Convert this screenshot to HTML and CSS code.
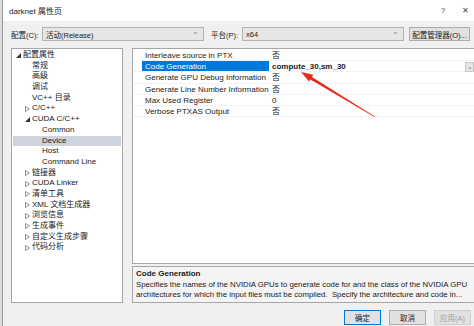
FILE: index.html
```html
<!DOCTYPE html>
<html>
<head>
<meta charset="utf-8">
<link rel="stylesheet" href="styles.css">
</head>
<body>
<div class="screen">
  <div class="backwin"></div>
  <div class="dialog">
    <div class="titlebar">
      <span class="title">darknet 属性页</span>
      <span class="tb-help">?</span>
      <span class="tb-close">✕</span>
    </div>
    <div class="configrow">
      <span class="lbl">配置(C):</span>
      <div class="combo"><span>活动(Release)</span><span class="chev">⌄</span></div>
      <span class="lbl lbl2">平台(P):</span>
      <div class="combo"><span>x64</span><span class="chev">⌄</span></div>
      <div class="btn cfgbtn">配置管理器(O)...</div>
    </div>
    <div class="main">
      <div class="tree">
        <div class="ti l1"><span class="tg"><svg width="5" height="5" viewBox="0 0 5 5"><path d="M5 0V5H0Z" fill="#333"/></svg></span>配置属性</div>
        <div class="ti l2"><span class="tg"></span>常规</div>
        <div class="ti l2"><span class="tg"></span>高级</div>
        <div class="ti l2"><span class="tg"></span>调试</div>
        <div class="ti l2"><span class="tg"></span>VC++ 目录</div>
        <div class="ti l2"><span class="tg"><svg width="5" height="6" viewBox="0 0 5 6"><path d="M0.5 0.5L4.5 3L0.5 5.5Z" fill="none" stroke="#777" stroke-width="0.8"/></svg></span>C/C++</div>
        <div class="ti l2"><span class="tg"><svg width="5" height="5" viewBox="0 0 5 5"><path d="M5 0V5H0Z" fill="#333"/></svg></span>CUDA C/C++</div>
        <div class="ti l3">Common</div>
        <div class="ti l3 sel">Device</div>
        <div class="ti l3">Host</div>
        <div class="ti l3">Command Line</div>
        <div class="ti l2"><span class="tg"><svg width="5" height="6" viewBox="0 0 5 6"><path d="M0.5 0.5L4.5 3L0.5 5.5Z" fill="none" stroke="#777" stroke-width="0.8"/></svg></span>链接器</div>
        <div class="ti l2"><span class="tg"><svg width="5" height="6" viewBox="0 0 5 6"><path d="M0.5 0.5L4.5 3L0.5 5.5Z" fill="none" stroke="#777" stroke-width="0.8"/></svg></span>CUDA Linker</div>
        <div class="ti l2"><span class="tg"><svg width="5" height="6" viewBox="0 0 5 6"><path d="M0.5 0.5L4.5 3L0.5 5.5Z" fill="none" stroke="#777" stroke-width="0.8"/></svg></span>清单工具</div>
        <div class="ti l2"><span class="tg"><svg width="5" height="6" viewBox="0 0 5 6"><path d="M0.5 0.5L4.5 3L0.5 5.5Z" fill="none" stroke="#777" stroke-width="0.8"/></svg></span>XML 文档生成器</div>
        <div class="ti l2"><span class="tg"><svg width="5" height="6" viewBox="0 0 5 6"><path d="M0.5 0.5L4.5 3L0.5 5.5Z" fill="none" stroke="#777" stroke-width="0.8"/></svg></span>浏览信息</div>
        <div class="ti l2"><span class="tg"><svg width="5" height="6" viewBox="0 0 5 6"><path d="M0.5 0.5L4.5 3L0.5 5.5Z" fill="none" stroke="#777" stroke-width="0.8"/></svg></span>生成事件</div>
        <div class="ti l2"><span class="tg"><svg width="5" height="6" viewBox="0 0 5 6"><path d="M0.5 0.5L4.5 3L0.5 5.5Z" fill="none" stroke="#777" stroke-width="0.8"/></svg></span>自定义生成步骤</div>
        <div class="ti l2"><span class="tg"><svg width="5" height="6" viewBox="0 0 5 6"><path d="M0.5 0.5L4.5 3L0.5 5.5Z" fill="none" stroke="#777" stroke-width="0.8"/></svg></span>代码分析</div>
      </div>
      <div class="right">
        <div class="grid">
          <div class="row"><span class="cat"></span><span class="name">Interleave source in PTX</span><span class="val">否</span></div>
          <div class="row"><span class="cat"></span><span class="name hl">Code Generation</span><span class="val bold">compute_30,sm_30<span class="dd">⌄</span></span></div>
          <div class="row"><span class="cat"></span><span class="name">Generate GPU Debug Information</span><span class="val">否</span></div>
          <div class="row"><span class="cat"></span><span class="name">Generate Line Number Information</span><span class="val">否</span></div>
          <div class="row"><span class="cat"></span><span class="name">Max Used Register</span><span class="val">0</span></div>
          <div class="row"><span class="cat"></span><span class="name">Verbose PTXAS Output</span><span class="val">否</span></div>
          <svg class="arrow" width="100" height="60" viewBox="290 60 100 60"><polygon points="302,71 314.3,73.8 313,75.9 376.2,115.7 375.8,116.3 311.4,78.5 310.1,80.6" fill="#e8291c"/></svg>
        </div>
        <div class="desc">
          <div class="dtitle">Code Generation</div>
          <div class="dline">Specifies the names of the NVIDIA GPUs to generate code for and the class of the NVIDIA GPU</div>
          <div class="dline">architectures for which the input files must be compiled.&nbsp; Specify the architecture and code in...</div>
        </div>
      </div>
    </div>
    <div class="btnrow">
      <div class="btn dbtn def">确定</div>
      <div class="btn dbtn">取消</div>
      <div class="btn dbtn dis">应用(A)</div>
    </div>
  </div>
</div>
</body>
</html>
```
FILE: styles.css
```css
* { box-sizing: border-box; }
html, body { margin: 0; padding: 0; }
body {
  width: 474px; height: 326px; overflow: hidden;
  font-family: "Liberation Sans", "Noto Sans CJK SC", sans-serif;
  font-size: 8px; color: #1a1a1a;
  background: #f0f0f0;
}
.screen { display: flex; height: 326px; }
.backwin { width: 3px; background: #dcdcdc; border-right: 1px solid #9a9a9a; flex: none; }
.dialog { flex: 1; display: flex; flex-direction: column; background: #f0f0f0; min-width: 0; }
.titlebar { height: 21px; flex: none; display: flex; align-items: center; padding-left: 6px; background: #ffffff; }
.title { font-size: 8px; flex: 1; }
.tb-help { width: 26px; text-align: center; color: #444; font-size: 8px; }
.tb-close { width: 18px; text-align: center; color: #444; font-size: 8px; }
.configrow { display: flex; align-items: center; height: 14px; flex: none; margin-top: 6px; padding-left: 8px; }
.lbl { width: 31px; flex: none; font-size: 7.5px; }
.lbl2 { margin-left: 7px; }
.combo { width: 162px; height: 14px; border: 1px solid #b4b4b4; background: #e6e6e6; display: flex; align-items: center; justify-content: space-between; padding: 0 4px 0 3px; flex: none; font-size: 7.5px; }
.chev { color: #888; font-size: 8px; line-height: 1; margin-top: -4px; }
.btn { height: 14px; border: 1px solid #adadad; background: #e1e1e1; display: flex; align-items: center; justify-content: center; white-space: nowrap; }
.cfgbtn { width: 61px; margin-left: 5px; font-size: 7.5px; flex: none; }
.main { display: flex; margin-top: 7px; height: 255px; flex: none; padding-left: 8px; }
.tree { width: 112px; height: 255px; background: #fff; border: 1px solid #a6a6a6; padding-top: 1px; flex: none; }
.ti { height: 10.7px; line-height: 10.7px; display: flex; align-items: center; white-space: nowrap; }
.tg { width: 7px; flex: none; display: flex; align-items: center; }
.l1 { padding-left: 4px; }
.l2 { padding-left: 20px; }
.l2 .tg { margin-left: -7px; }
.l3 { padding-left: 30px; }
.sel { background: #cfd3dd; margin: 0 1px; padding-left: 29px; }
.right { margin-left: 9px; flex: 1; min-width: 0; height: 255px; display: flex; flex-direction: column; }
.grid { position: relative; flex: 1; min-height: 0; background: #fff; border: 1px solid #a6a6a6; border-right: none; padding-top: 1px; }
.row { display: flex; height: 11.2px; line-height: 11.2px; border-bottom: 1px solid #f3f3f3; }
.cat { width: 9px; flex: none; }
.name { width: 127px; flex: none; padding-left: 3px; white-space: nowrap; overflow: hidden; }
.hl { background: #0078d7; color: #fff; }
.val { flex: 1; padding-left: 3px; display: flex; justify-content: space-between; }
.bold { font-weight: 700; }
.dd { width: 9px; height: 10px; margin-top: 0.5px; background: #e6e6e6; border: 1px solid #c8c8c8; color: #777; font-weight: 400; font-size: 7px; display: flex; align-items: center; justify-content: center; line-height: 1; }
.arrow { position: absolute; left: 156px; top: 12px; }
.desc { margin-top: 2px; height: 37px; flex: none; border: 1px solid #a6a6a6; border-right: none; background: #f4f4f4; padding: 2px 3px; overflow: hidden; }
.dtitle { font-weight: 700; line-height: 10.5px; }
.dline { line-height: 10.5px; white-space: nowrap; overflow: hidden; font-size: 7.8px; }
.btnrow { display: flex; gap: 8px; margin-top: 7px; padding-left: 341px; flex: none; }
.dbtn { width: 37px; height: 15px; font-size: 7.5px; flex: none; }
.def { border-color: #0078d7; }
.dis { color: #a0a0a0; border-color: #cfcfcf; }
```
